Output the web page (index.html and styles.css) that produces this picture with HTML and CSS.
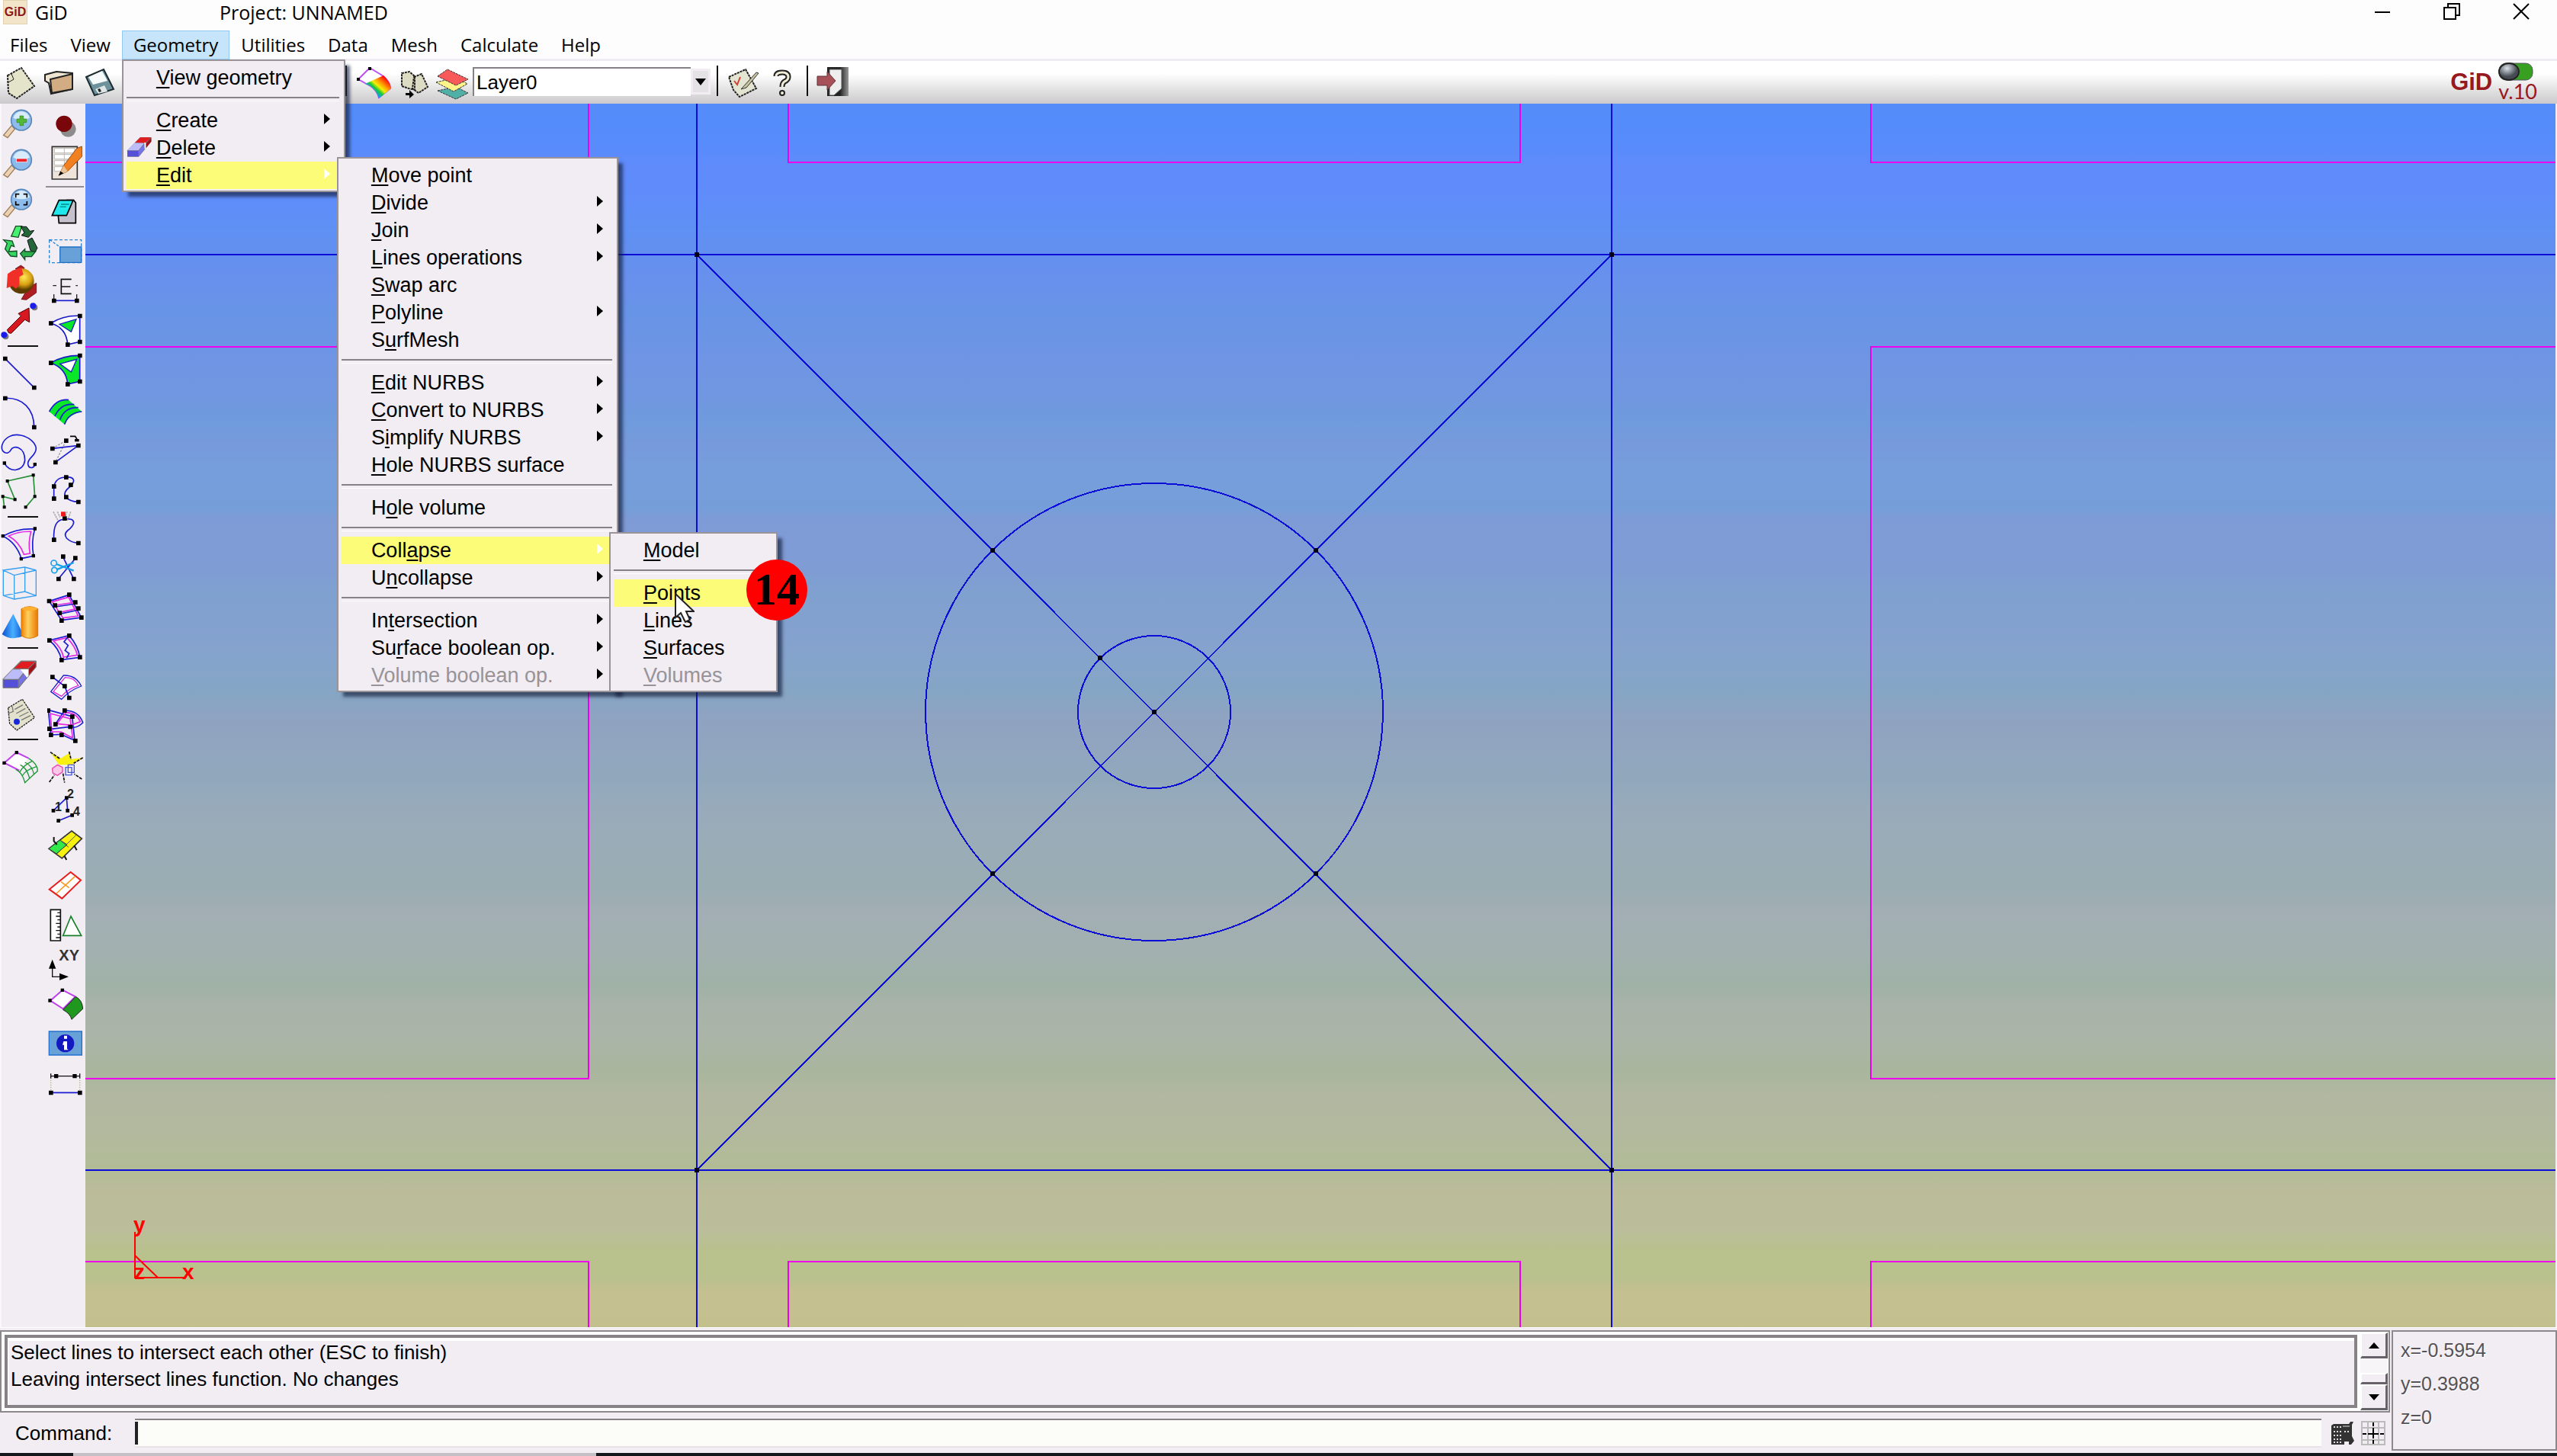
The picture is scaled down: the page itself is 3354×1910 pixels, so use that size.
FILE: index.html
```html
<!DOCTYPE html>
<html lang="en">
<head>
<meta charset="utf-8">
<title>GiD - Project: UNNAMED</title>
<link rel="stylesheet" href="styles.css">
</head>
<body>
<header class="titlebar">
  <span class="app-badge">GiD</span>
  <span class="app-name">GiD</span>
  <h1 class="project">Project: UNNAMED</h1>
  <div class="window-buttons">
    <button aria-label="Minimize"><svg viewBox="0 0 22 22"><path d="M1 12H21"/></svg></button>
    <button aria-label="Restore"><svg viewBox="0 0 22 22"><path d="M1 6H16V21H1ZM6 6V1H21V16H16"/></svg></button>
    <button aria-label="Close"><svg viewBox="0 0 22 22"><path d="M1 1L21 21M21 1L1 21"/></svg></button>
  </div>
</header>

<nav class="menubar">
  <ul>
    <li><button>Files</button></li>
    <li><button>View</button></li>
    <li class="open"><button>Geometry</button>
      <ul class="menu menu-geometry">
        <li><button><u>V</u>iew geometry</button></li>
        <li class="rule"></li>
        <li><button class="more"><u>C</u>reate</button></li>
        <li><button class="more"><svg class="menu-icon" viewBox="8 377 140 116"><path d="M12 452L82 381H142V405L74 487H12Z" fill="#777"/><path d="M12 452L50 412H104L72 452Z" fill="#bcbcf8"/><path d="M12 455H72V485H14Z" fill="#5450d8"/><path d="M72 455L108 414V442L74 485Z" fill="#7672e8"/><path d="M54 410L82 382H140L110 412Z" fill="#e01c20"/><path d="M114 414L141 385V405L114 438Z" fill="#a01018"/><path d="M104 410H112V440L106 446Z" fill="#fff"/></svg><u>D</u>elete</button></li>
        <li class="active"><button class="more"><u>E</u>dit</button>
          <ul class="menu menu-edit">
            <li><button><u>M</u>ove point</button></li>
            <li><button class="more"><u>D</u>ivide</button></li>
            <li><button class="more"><u>J</u>oin</button></li>
            <li><button class="more"><u>L</u>ines operations</button></li>
            <li><button><u>S</u>wap arc</button></li>
            <li><button class="more"><u>P</u>olyline</button></li>
            <li><button>S<u>u</u>rfMesh</button></li>
            <li class="rule"></li>
            <li><button class="more"><u>E</u>dit NURBS</button></li>
            <li><button class="more"><u>C</u>onvert to NURBS</button></li>
            <li><button class="more">S<u>i</u>mplify NURBS</button></li>
            <li><button><u>H</u>ole NURBS surface</button></li>
            <li class="rule"></li>
            <li><button>H<u>o</u>le volume</button></li>
            <li class="rule"></li>
            <li class="active"><button class="more">Coll<u>a</u>pse</button>
              <ul class="menu menu-collapse">
                <li><button><u>M</u>odel</button></li>
                <li class="rule"></li>
                <li class="active"><button><u>P</u>oints</button>
                  <svg class="pointer" viewBox="0 0 26 40"><path d="M1 1V32L8 26L14 38L20 35L15 24H25Z" fill="#fff" stroke="#222" stroke-width="2"/></svg>
                  <span class="step">14</span>
                </li>
                <li><button><u>L</u>ines</button></li>
                <li><button><u>S</u>urfaces</button></li>
                <li><button disabled><u>V</u>olumes</button></li>
              </ul>
            </li>
            <li><button class="more">U<u>n</u>collapse</button></li>
            <li class="rule"></li>
            <li><button class="more">In<u>t</u>ersection</button></li>
            <li><button class="more">Su<u>r</u>face boolean op.</button></li>
            <li><button class="more" disabled><u>V</u>olume boolean op.</button></li>
          </ul>
        </li>
      </ul>
    </li>
    <li><button>Utilities</button></li>
    <li><button>Data</button></li>
    <li><button>Mesh</button></li>
    <li><button>Calculate</button></li>
    <li><button>Help</button></li>
  </ul>
</nav>

<div class="toolbar">
  <button aria-label="New"><svg viewBox="0 80 52 56"><path d="M10 99L28 89L45 113L22 129L11 122Z" fill="#e4e4ca" stroke="#222" stroke-width="2" stroke-dasharray="3 1"/><path d="M11 108L18 104L15 97" fill="none" stroke="#222"/></svg></button>
  <button aria-label="Open"><svg viewBox="52 80 52 56"><path d="M59 98L74 94L95 96V117L67 123L64 109L59 106Z" fill="#eee6d2" stroke="#222" stroke-width="2"/><path d="M66 104L95 97V117L68 122Z" fill="#d2ac82" stroke="#222" stroke-width="2"/></svg></button>
  <button aria-label="Save"><svg viewBox="104 80 52 56"><path d="M113 101L136 91L149 117L124 125Z" fill="#6d929c" stroke="#1d2b30" stroke-width="2"/><path d="M116 101L134 93L141 106L122 111Z" fill="#f6fafa"/><path d="M125 117L137 112L141 120L129 123Z" fill="#dfe6e8"/><path d="M128 117L131 116L133 120L130 121Z" fill="#222"/></svg></button>
  <span class="covered"></span>
  <span class="divider"></span>
  <button class="wide" aria-label="Render"><svg viewBox="460 80 56 56"><defs><linearGradient id="rainbow" x1="1" y1="0" x2="0" y2="1"><stop offset=".15" stop-color="#f00"/><stop offset=".35" stop-color="#ff9800"/><stop offset=".48" stop-color="#f4f000"/><stop offset=".58" stop-color="#1dc83a"/><stop offset=".7" stop-color="#08a0f0"/><stop offset=".82" stop-color="#0018e0"/></linearGradient></defs><path d="M470 104L485 89L503 100Q512 108 512 116L497 128Q494 118 486 113Z" fill="#fff" stroke="#c050f0" stroke-width="2"/><path d="M503 99Q512 108 513 116L497 129Q494 119 486 113L479 110Z" fill="url(#rainbow)"/><path d="M468 102h4v4h-4zM483 88h4v4h-4z"/></svg></button>
  <button aria-label="Pages"><svg viewBox="516 80 50 56"><path d="M526 96L536 94L543 100V118L535 116L526 113ZM542 101L552 97L560 114L548 122L540 116Z" fill="#dcdcc4" stroke="#222" stroke-width="2" stroke-dasharray="3 1"/><path d="M531 122h5v-4l6 6l-6 5v-4h-5z"/></svg></button>
  <button aria-label="Layers"><svg viewBox="568 80 52 56"><path d="M574 119L598 114L614 122L598 130Z" fill="#50b0a8" stroke="#333" stroke-dasharray="3 1"/><path d="M572 108L598 102L613 110L595 120Z" fill="#fff48a" stroke="#333" stroke-dasharray="3 1"/><path d="M574 100L587 91L614 104L598 112Z" fill="#f85a5a" stroke="#333" stroke-dasharray="3 1"/></svg></button>
  <label class="layer-picker"><select aria-label="Layer"><option>Layer0</option></select><span class="drop"></span></label>
  <span class="divider"></span>
  <button class="wide" aria-label="Preferences"><svg viewBox="952 80 56 56"><path d="M958 101L980 91L994 116L972 127L964 118Z" fill="#e4e4d2" stroke="#222" stroke-width="2" stroke-dasharray="3 1"/><path d="M965 106L969 111L973 101" fill="none" stroke="#d04030" stroke-width="2"/><path d="M974 117L994 95L997 96L981 115Z" fill="#c8c4a0" stroke="#333"/></svg></button>
  <button aria-label="Help"><svg viewBox="1006 80 52 56"><path d="M1018 100Q1018 95 1026 95Q1034 95 1034 101Q1034 105 1029 107Q1026 109 1026 114" fill="none" stroke="#222" stroke-width="7"/><path d="M1018 100Q1018 95 1026 95Q1034 95 1034 101Q1034 105 1029 107Q1026 109 1026 114" fill="none" stroke="#f0ecd8" stroke-width="3"/><circle cx="1026" cy="122" r="3" fill="#f0ecd8" stroke="#222" stroke-width="2"/></svg></button>
  <span class="divider"></span>
  <button aria-label="Exit"><svg viewBox="1070 80 52 56"><defs><linearGradient id="door"><stop offset=".6" stop-color="#222"/><stop offset="1" stop-color="#999"/></linearGradient></defs><path d="M1087 88H1115V126H1087Z" fill="url(#door)"/><path d="M1090 91H1106V116L1096 125H1090Z" fill="#eee" stroke="#555"/><path d="M1074 100H1087V94L1098 106L1087 118V112H1074Z" fill="#a85058" stroke="#5b3338"/></svg></button>
  <div class="brand">
    <span class="brand-name">GiD</span>
    <div class="brand-side">
      <svg viewBox="0 0 46 24"><defs><radialGradient id="knob" cx=".4" cy=".3"><stop offset="0" stop-color="#dce2e8"/><stop offset="1" stop-color="#454b52"/></radialGradient></defs><rect x="1" y="1" width="44" height="22" rx="9" fill="#38a020" stroke="#556"/><ellipse cx="14" cy="12" rx="13" ry="11" fill="url(#knob)" stroke="#222" stroke-width="2"/></svg>
      <span>v.10</span>
    </div>
  </div>
</div>

<main class="workspace">
  <div class="palette">
    <div class="column column-main">
      <button aria-label="Zoom in"><svg viewBox="0 21 156 156"><g id="lens"><path d="M46 104L58 118L30 152L14 142Z" fill="#ecd2b4" stroke="#9c7a52" stroke-width="4"/><circle cx="84" cy="83" r="40" fill="#8dbcec" stroke="#5b87b8" stroke-width="5"/><path d="M52 74Q60 50 84 48Q110 50 117 74Q84 90 52 74Z" fill="#d7ebfb"/></g><path d="M78 66h14v12h12v14H92v12H78V92H66V78h12z" fill="#52b838" stroke="#2d8420" stroke-width="2"/></svg></button>
      <button aria-label="Zoom out"><svg viewBox="0 21 156 156"><use href="#lens"/><rect x="64" y="78" width="42" height="14" fill="#ee2028" stroke="#fff" stroke-width="2"/></svg></button>
      <button aria-label="Zoom frame"><svg viewBox="0 21 156 156"><use href="#lens"/><path d="M62 76V62H76M92 62H106V76M106 90V104H92M76 104H62V90" fill="none" stroke="#000" stroke-width="5"/></svg></button>
      <button aria-label="Redraw"><svg viewBox="0 489 156 156"><path d="M44 540L62 500H86L72 544Z" fill="#48f070" stroke="#174b24" stroke-width="4"/><path d="M82 502H104L118 520L134 517L112 544L84 536L96 526Z" fill="#24663a" stroke="#111" stroke-width="3"/><path d="M14 554L48 558L56 580L44 576L34 600L66 598V620L42 618L20 590L28 568Z" fill="#34d860" stroke="#174b24" stroke-width="4"/><path d="M108 556L126 546L147 586L138 602L120 596Z" fill="#24663a" stroke="#111" stroke-width="3"/><path d="M80 608L98 590V600H140L124 620H98V632Z" fill="#2ab04c" stroke="#174b24" stroke-width="4"/></svg></button>
      <button aria-label="Shading"><svg viewBox="0 645 156 156"><defs><radialGradient id="gold" cx=".6" cy=".35"><stop offset="0" stop-color="#ffe85a"/><stop offset=".6" stop-color="#d8a010"/><stop offset="1" stop-color="#5c3c00"/></radialGradient></defs><path d="M60 668L82 654L96 664L90 680ZM110 744L143 724V762L104 790L84 788Z" fill="#b01c24" stroke="#400" stroke-width="2"/><circle cx="84" cy="716" r="50" fill="url(#gold)"/><path d="M30 688L50 674L84 664L92 690L76 700V730L64 746L48 736L26 744Z" fill="#f03028"/></svg></button>
      <button aria-label="Rotate"><svg viewBox="0 801 156 156"><path d="M34 920L28 908L82 854L72 844L114 822L116 878L98 868L44 922Z" fill="#d81820" stroke="#500" stroke-width="3"/><circle cx="136" cy="820" r="12" fill="#777"/><circle cx="130" cy="814" r="12" fill="#1c1ce8"/><circle cx="22" cy="934" r="12" fill="#777"/><circle cx="16" cy="928" r="12" fill="#1c1ce8"/></svg></button>
      <hr>
      <button aria-label="Line"><svg viewBox="0 75 156 156"><path d="M20 91L134 205" class="blue"/><path d="M12 83h17v17h-17zM126 197h17v17h-17z"/></svg></button>
      <button aria-label="Arc"><svg viewBox="0 231 156 156"><path d="M20 247C90 244 134 290 134 361" class="blue"/><path d="M12 239h17v17h-17zM126 353h17v17h-17z"/></svg></button>
      <button aria-label="NURBS line"><svg viewBox="0 387 156 156"><path d="M18 503C34 540 90 540 98 492C98 436 50 430 42 452C30 474 2 460 8 432C18 400 50 386 82 393C116 400 140 424 142 444C142 476 108 480 110 506C112 526 132 524 138 508" class="blue"/><path d="M11 496h13v13h-13zM131 501h13v13h-13z"/></svg></button>
      <button aria-label="Polyline"><svg viewBox="0 543 156 156"><path d="M17 676L12 634L59 646L29 573L131 550L137 634L101 676" fill="none" stroke="#289038" stroke-width="5"/><path d="M11 670h12v12h-12zM5 628h12v12h-12zM53 640h12v12h-12zM23 567h12v12h-12zM125 544h12v12h-12zM131 628h12v12h-12zM95 670h12v12h-12z"/></svg></button>
      <hr>
      <button aria-label="NURBS surface"><svg viewBox="0 747 156 156"><path d="M12 790Q66 758 137 762Q122 812 132 868L84 878Q64 816 12 790Z" class="blue"/><path d="M34 790Q74 770 122 772Q110 818 118 858L94 862Q76 812 34 790Z" class="pink"/><path d="M5 783h13v13h-13zM131 754h13v13h-13zM125 861h13v13h-13zM77 873h13v13h-13z"/></svg></button>
      <button aria-label="Volume"><svg viewBox="0 3 156 156"><path d="M13 24L98 12L142 24L56 44ZM13 24V124L56 138V44M56 138L142 124V24M13 124L98 108L142 124M98 12V108" fill="none" stroke="#38a0f0" stroke-width="4"/></svg></button>
      <button aria-label="Object"><svg viewBox="0 159 156 156"><defs><linearGradient id="blueFade" x2="1"><stop stop-color="#0a50d0"/><stop offset=".5" stop-color="#48b0ff"/><stop offset="1" stop-color="#0a50d0"/></linearGradient><linearGradient id="orangeFade" x2="1"><stop stop-color="#f08000"/><stop offset=".4" stop-color="#ffd060"/><stop offset="1" stop-color="#e87800"/></linearGradient></defs><path d="M52 196L8 276Q44 304 94 282Z" fill="url(#blueFade)"/><path d="M84 176Q116 158 149 176V282Q116 302 84 282Z" fill="url(#orangeFade)" stroke="#d87800" stroke-width="3"/><ellipse cx="116" cy="176" rx="30" ry="8" fill="#ffb030"/></svg></button>
      <hr>
      <button aria-label="Delete"><svg viewBox="0 363 156 156"><path d="M12 452L82 381H142V405L74 487H12Z" fill="#777" stroke="#777" stroke-width="3"/><path d="M14 452L50 415H102L72 452Z" fill="#bcbcf8"/><path d="M14 456H70V485H14Z" fill="#5450d8"/><path d="M74 455L108 418V442L74 483Z" fill="#7672e8"/><path d="M56 410L84 384H138L110 410Z" fill="#e01c20"/><path d="M114 412L140 386V405L114 436Z" fill="#a01018"/><path d="M80 414H112V440L106 446Z" fill="#fff"/></svg></button>
      <button aria-label="List"><svg viewBox="0 519 156 156"><path d="M32 566L88 532L136 604L66 654L38 628Z" fill="#e2e2cc" stroke="#222" stroke-width="4" stroke-dasharray="8 3"/><path d="M32 588L52 580L48 560M58 572L90 554M64 588L100 568M76 600L112 582M84 614L120 596" fill="none" stroke="#777" stroke-width="4"/><circle cx="66" cy="620" r="12" fill="#1828d8"/></svg></button>
      <hr>
      <button aria-label="Mesh"><svg viewBox="0 723 156 156"><path d="M76 812L17 782L65 741L112 764" fill="#fff" stroke="#c040f0" stroke-width="6"/><path d="M112 764Q148 786 148 814L98 860Q88 820 62 808M80 790Q108 804 116 844M98 780Q126 792 134 828M88 834Q96 812 146 796M78 818Q92 792 126 776" fill="none" stroke="#209838" stroke-width="4"/><path d="M10 776h13v13h-13zM59 735h13v13h-13z"/></svg></button>
    </div>
    <div class="column column-extra">
      <button aria-label="Point"><svg viewBox="168 21 168 156"><circle cx="268" cy="118" r="31" fill="#8c8c8c"/><circle cx="252" cy="97" r="32" fill="#78060a"/></svg></button>
      <button aria-label="Edit sheet"><svg viewBox="168 177 168 156"><path d="M205 187H304V315H205Z" fill="#eee4da" stroke="#333" stroke-width="5"/><path d="M214 194H294V212H214ZM214 218H294V236H214ZM214 242H270V260H214ZM214 266H250V284H214ZM253 192V262" fill="#fff" stroke="#bbb" stroke-width="3"/><path d="M232 300L250 262L302 194L322 186V226L266 284Z" fill="#f08020" stroke="#9c4a08" stroke-width="3"/><path d="M232 300L250 262L266 284Z" fill="#e8c49c"/><path d="M230 302L238 284L250 292Z"/></svg></button>
      <hr>
      <button aria-label="Book"><svg viewBox="168 363 168 156"><path d="M229 458L262 398H290L298 408V488H232Z" fill="#c4c0cc" stroke="#000" stroke-width="5"/><path d="M205 458L232 398H288L262 458Z" fill="#20e8ec" stroke="#000" stroke-width="5"/><path d="M240 414H272M236 424H260" stroke="#088" stroke-width="4"/></svg></button>
      <button aria-label="Window zoom"><svg viewBox="168 519 168 156"><path d="M194 554H320V644H194Z" fill="none" stroke="#2884d0" stroke-width="4" stroke-dasharray="12 8"/><path d="M196 554L236 582" stroke="#2884d0" stroke-width="4" stroke-dasharray="10 6"/><path d="M236 582H320V643H236Z" fill="#68a0d8" stroke="#2070c8" stroke-width="4"/></svg></button>
      <button aria-label="Entity"><svg viewBox="168 675 168 156"><path d="M281 709H241V766H281M241 738H277" fill="none" stroke="#111" stroke-width="5"/><path d="M208 734H222M298 734H306M212 768V790M302 768V790" stroke="#222" stroke-width="4"/><path d="M212 793H302" class="blue"/><path d="M204 785h17v17h-17zM294 785h17v17h-17z"/></svg></button>
      <button aria-label="Inner surface"><svg viewBox="168 831 168 156"><path d="M200 882Q250 850 314 853V955L266 966Q262 900 200 882Z" fill="#fff" stroke="#1818c8" stroke-width="5"/><path d="M234 886L300 866L280 916Z" fill="#08e828" stroke="#1818c8" stroke-width="4"/><path d="M192 874h17v17h-17zM306 845h17v17h-17zM306 947h17v17h-17zM258 958h17v17h-17z"/></svg></button>
      <button aria-label="Holed surface"><svg viewBox="168 57 168 156"><path d="M200 108Q250 78 314 79V181L266 192Q262 130 200 108Z" fill="#08e828" stroke="#1818c8" stroke-width="5"/><path d="M236 112L302 94L280 144Z" fill="#fff" stroke="#1818c8" stroke-width="4"/><path d="M192 100h17v17h-17zM306 71h17v17h-17zM306 173h17v17h-17zM258 184h17v17h-17z"/></svg></button>
      <button aria-label="Parallel surfaces"><svg viewBox="168 213 168 156"><path d="M194 300Q222 248 270 254L322 300Q272 310 254 350Z" fill="#08e828"/><path d="M194 300Q222 248 270 254M216 318Q240 266 292 272M236 332Q254 282 308 284M254 350Q270 304 322 300" class="blue"/></svg></button>
      <button aria-label="Swap"><svg viewBox="168 369 168 156"><path d="M206 445L260 414L218 499" fill="none" stroke="#999" stroke-width="4" stroke-dasharray="8 5"/><path d="M206 445L308 433L218 499" class="blue"/><path d="M276 397H296L306 414" fill="none" stroke="#000" stroke-width="5"/><path d="M294 408h17v10h-17zM198 437h17v17h-17zM252 406h17v17h-17zM300 425h17v17h-17zM210 491h17v17h-17z"/></svg></button>
      <button aria-label="Spline"><svg viewBox="168 525 168 156"><path d="M212 642V594Q220 558 260 558Q288 556 290 572Q286 590 270 600Q250 616 256 634Q274 654 308 655" class="blue"/><path d="M204 634h17v17h-17zM204 586h17v17h-17zM252 550h17v17h-17zM270 580h17v17h-17zM252 628h17v17h-17zM300 647h17v17h-17z"/></svg></button>
      <button aria-label="Move spline point"><svg viewBox="168 681 168 156"><path d="M212 804Q208 722 254 724Q288 718 290 736Q288 752 266 768Q250 782 262 798Q280 816 308 817" class="blue"/><path d="M210 694L228 728M226 694L236 716M278 694L266 728M264 694L258 712" stroke="#aaa" stroke-width="5" stroke-dasharray="7 3"/><path d="M246 712h17v17h-17zM204 796h17v17h-17zM300 809h17v17h-17z"/><path d="M240 694h18v18h-18z" fill="#f01818"/></svg></button>
      <button aria-label="Cut"><svg viewBox="168 837 168 156"><path d="M248 872L290 958M296 878L230 958" class="blue"/><path d="M222 900L290 926M222 922L290 894" stroke="#18a0e8" stroke-width="7"/><circle cx="212" cy="896" r="11" fill="none" stroke="#18a0e8" stroke-width="5"/><circle cx="214" cy="924" r="11" fill="none" stroke="#18a0e8" stroke-width="5"/><path d="M240 862h17v17h-17zM288 868h17v17h-17zM222 950h17v17h-17zM282 950h17v17h-17z"/></svg></button>
      <button aria-label="Divide surface"><svg viewBox="168 93 168 156"><path d="M194 146L272 121L320 210L242 221Z" class="blue"/><path d="M216 162L296 150M234 190L308 174M206 148L270 130L308 204L248 212Z" class="pink"/><path d="M218 168L298 156M236 196L310 180" class="blue"/><path d="M185 137h17v17h-17zM264 112h17v17h-17zM288 142h17v17h-17zM300 166h17v17h-17zM312 202h17v17h-17zM234 214h17v17h-17zM226 184h17v17h-17zM208 154h17v17h-17z"/></svg></button>
      <button aria-label="Split surface"><svg viewBox="168 249 168 156"><path d="M194 300L272 281Q308 322 314 367L242 377Q232 330 194 300Z" class="blue"/><path d="M210 302L264 290Q298 326 304 358L250 366Q242 330 210 302Z" class="pink"/><path d="M268 286L252 306L268 320L256 340L272 352L262 370" class="blue"/><path d="M186 292h17v17h-17zM264 273h17v17h-17zM306 358h17v17h-17zM234 369h17v17h-17z"/></svg></button>
      <button aria-label="Trim surface"><svg viewBox="168 405 168 156"><path d="M200 502L250 438Q298 436 320 480Q272 498 242 532Z" fill="#fff" stroke="#1818c8" stroke-width="4"/><path d="M210 502L256 446Q294 446 308 478Q268 490 242 520Z" fill="none" stroke="#e020e0" stroke-width="4"/><path d="M206 444L248 476M256 484L272 526" class="blue"/><path d="M198 436h17v17h-17zM246 472h17v17h-17zM264 518h17v17h-17z"/></svg></button>
      <button aria-label="Intersect surfaces"><svg viewBox="168 561 168 156"><path d="M190 574L284 600L294 694L240 670L200 672ZM218 630L254 576Q310 576 326 624Q300 650 276 640L194 650" class="blue"/><path d="M198 588L276 608L286 684L240 660L204 660ZM224 628L260 584Q302 586 316 620L278 634Z" class="pink"/><path d="M186 568h12v17h-12zM246 568h17v17h-17zM276 592h17v17h-17zM268 632h17v17h-17zM210 622h17v17h-17zM186 640h17v17h-17zM192 664h17v17h-17zM234 664h17v17h-17zM288 687h17v17h-17z"/></svg></button>
      <button aria-label="Explode"><svg viewBox="168 717 168 156"><path d="M198 740L240 764L272 744L278 768L326 762L282 790H232Z" fill="#f8f010"/><path d="M198 740L236 766M326 762L290 784M194 858L214 830M248 824L254 860M322 846L292 826M272 738L280 770" stroke="#111" stroke-width="5" stroke-dasharray="12 4"/><path d="M206 804L226 790L246 800V818L226 832L208 822Z" fill="#f8c8e8" stroke="#f040b0" stroke-width="4"/><path d="M258 800H282V830H258ZM268 790H292V820H268Z" fill="none" stroke="#4858e0" stroke-width="4"/></svg></button>
      <button aria-label="Renumber"><svg viewBox="168 873 168 156"><path d="M210 970L262 920L266 970M230 1010L284 988" class="blue"/><path d="M203 963h14v14h-14zM255 913h14v14h-14zM259 963h14v14h-14zM223 1003h14v14h-14zM277 981h14v14h-14z"/><g class="digits"><text x="216" y="972">1</text><text x="264" y="922">2</text><text x="288" y="990">4</text></g></svg></button>
      <button aria-label="Patch"><svg viewBox="168 69 168 156"><path d="M192 160L282 90L322 120L244 198Z" fill="#f8f010" stroke="#333" stroke-width="5"/><path d="M192 160L236 126L264 144L222 180Z" fill="#30e848" stroke="#333" stroke-width="3"/><path d="M222 182L302 104M236 126L270 154" stroke="#555" stroke-width="3"/><path d="M212 114V130L224 144M292 148L302 166M254 190L262 204" fill="none" stroke="#111" stroke-width="6"/></svg></button>
      <button aria-label="Frame patch"><svg viewBox="168 225 168 156"><path d="M194 320L278 252L318 284L244 356Z" fill="#fff" stroke="#e81c1c" stroke-width="6"/><path d="M222 336L296 268M240 290L272 314" stroke="#f89820" stroke-width="5"/></svg></button>
      <button aria-label="Measure"><svg viewBox="168 381 168 156"><path d="M199 400H238V522H199Z" fill="#fff" stroke="#111" stroke-width="5"/><path d="M226 412H238M220 426H238M226 440H238M220 454H238M226 468H238M220 482H238M226 496H238M220 510H238" stroke="#111" stroke-width="4"/><path d="M279 426L248 502H320Z" fill="#fff" stroke="#188028" stroke-width="5"/></svg></button>
      <button aria-label="XY plane"><svg viewBox="168 537 168 156"><text class="axis-label" x="232" y="599">XY</text><path d="M206 610V664H262" fill="none" stroke="#111" stroke-width="4"/><path d="M206 596L220 632H192ZM270 664L234 650V678Z"/></svg></button>
      <button aria-label="Filled surface"><svg viewBox="168 693 168 156"><path d="M198 758L246 716L296 742L248 790Z" fill="#fff" stroke="#c040f0" stroke-width="6"/><path d="M248 794L298 742Q324 756 326 790L282 832Q276 808 248 794Z" fill="#209820" stroke="#222" stroke-width="3"/><path d="M190 751h13v13h-13zM239 710h13v13h-13z"/></svg></button>
      <button aria-label="Information"><svg viewBox="168 849 168 156"><path d="M193 879H322V972H193Z" fill="#68a0d8" stroke="#2070d0" stroke-width="4"/><circle cx="257" cy="926" r="35" fill="#1418c0"/><path d="M252 896h12v12h-12zM250 918h14v30l6 4h-18v-20h-6z" fill="#fff"/></svg></button>
      <button aria-label="Distance"><svg viewBox="168 1005 168 156"><path d="M200 1055H314M200 1045V1064M314 1045V1064" stroke="#111" stroke-width="4"/><path d="M200 1070V1112M314 1070V1112" stroke="#aab88c" stroke-width="4" stroke-dasharray="4 5"/><path d="M200 1120H314" class="blue"/><path d="M213 1047h16v16h-16zM286 1047h16v16h-16zM192 1112h17v17h-17zM306 1112h17v17h-17z"/></svg></button>
    </div>
  </div>
  <div class="view">
    <svg viewBox="0 0 3240 1606" preserveAspectRatio="xMinYMin slice" aria-label="Model">
      <g class="magenta">
        <path d="M0 77H660V0M922 0V77H1882V0M2342 0V77H3240"/>
        <path d="M0 319H660V1279H0M3240 319H2342V1279H3240"/>
        <path d="M0 1519H660V1606M922 1606V1519H1882V1606M2342 1606V1519H3240"/>
      </g>
      <g class="geometry">
        <path d="M0 198H3240M0 1399H3240M802 0V1606M2002 0V1606"/>
        <path d="M802 198L2002 1399M2002 198L802 1399"/>
        <circle cx="1402" cy="798" r="300"/>
        <circle cx="1402" cy="798" r="100"/>
      </g>
      <path class="nodes" d="M799 195h6v6h-6zM1999 195h6v6h-6zM799 1396h6v6h-6zM1999 1396h6v6h-6zM1399 795h6v6h-6zM1187 583h6v6h-6zM1611 583h6v6h-6zM1187 1007h6v6h-6zM1611 1007h6v6h-6zM1328 724h6v6h-6z"/>
      <g class="axes">
        <path d="M65 1480V1540H130M65 1511L95 1540"/>
        <text x="63" y="1480">y</text><text x="127" y="1542">x</text><text x="64" y="1542">z</text>
      </g>
    </svg>
  </div>
</main>

<footer class="bottom">
  <div class="console">
    <div class="log-frame">
      <div class="log" role="log">
        <p>Select lines to intersect each other (ESC to finish)</p>
        <p>Leaving intersect lines function. No changes</p>
      </div>
      <div class="scroll">
        <button class="up" aria-label="Scroll up"></button>
        <span class="trough"></span>
        <span class="thumb"></span>
        <button class="down" aria-label="Scroll down"></button>
      </div>
    </div>
    <div class="command">
      <label for="command">Command:</label>
      <div class="command-box"><span class="caret"></span><input id="command" type="text"></div>
      <button aria-label="Calculator"><svg viewBox="0 0 32 32"><path d="M1 6L4 4H24L26 1H30L28 5V20L31 26L27 31H24V27H18V31H1Z" fill="#333"/><path d="M4 8H16M4 14H14M18 14H24M4 19H16M4 24H16M4 28H16" stroke="#ddd" stroke-width="2" stroke-dasharray="2 2"/><path d="M16 7H25" stroke="#888" stroke-width="2"/></svg></button>
      <button aria-label="Grid"><svg viewBox="0 0 32 32"><path d="M1 1H31V31H1ZM9 1V31M23 1V31M1 9H31M1 25H31" fill="none" stroke="#bbb" stroke-width="2"/><path d="M16 2V30M2 17H30" stroke="#000" stroke-width="2" stroke-dasharray="5 2 14 2"/></svg></button>
    </div>
  </div>
  <div class="coords">
    <p>x=-0.5954</p>
    <p>y=0.3988</p>
    <p>z=0</p>
  </div>
</footer>
<div class="taskbar"></div>
</body>
</html>
```
FILE: styles.css
```css
* { box-sizing: border-box; }
html, body { height: 100%; }
body {
  margin: 0;
  display: flex;
  flex-direction: column;
  overflow: hidden;
  background: #f1edf3;
  color: #000;
  font: 26px/36px "Liberation Sans", Arial, sans-serif;
}
button {
  margin: 0;
  padding: 0;
  border: 0;
  background: none;
  color: inherit;
  font: inherit;
  text-align: left;
}
ul { list-style: none; margin: 0; padding: 0; }
p { margin: 0; }
svg { display: block; }

/* Title bar */
.titlebar {
  display: flex;
  align-items: center;
  height: 40px;
  flex: none;
  padding: 0 28px 8px 4px;
  background: #fdfdfd;
  font: 25px/32px "Open Sans", "Noto Sans", sans-serif;
}
.app-badge {
  width: 32px;
  height: 32px;
  margin-right: 10px;
  border: 1px solid #e2d2b0;
  background: #f1e4c8;
  color: #8c1818;
  font: bold 16px/30px "Liberation Sans", sans-serif;
  text-align: center;
}
.app-name { width: 242px; }
.project { margin: 0; font: inherit; }
.window-buttons { display: flex; gap: 48px; margin-left: auto; padding: 0 8px 2px 0; }
.window-buttons button { width: 43px; }
.window-buttons svg { width: 22px; height: 22px; margin-left: auto; fill: none; stroke: #000; stroke-width: 2; }

/* Menu bar */
.menubar {
  flex: none;
  height: 40px;
  border-bottom: 3px solid #f0ecf3;
  background: #fdfdfd;
}
.menubar > ul { display: flex; margin-left: -2px; }
.menubar > ul > li { position: relative; }
.menubar > ul > li > button {
  height: 38px;
  padding: 0 14px;
  border: 1px solid transparent;
  font: 24px/34px "Open Sans", "Noto Sans", sans-serif;
}
.menubar > ul > .open > button { border-color: #90c8f6; background: #c6e4fa; }

/* Drop-down menus */
.menu {
  position: absolute;
  z-index: 2;
  padding: 4px;
  border: 2px solid #9a9498;
  background: #f1edf3;
  box-shadow: 7px 7px 4px -1px rgba(20, 30, 60, .65);
  font-size: 27px;
}
.menu li { position: relative; }
.menu li > button {
  display: block;
  position: relative;
  width: 100%;
  height: 36px;
  padding-left: 39px;
  line-height: 37px;
  white-space: nowrap;
}
.menu button:disabled { color: #979399; }
.menu u { text-decoration-thickness: 2px; text-underline-offset: 3px; text-decoration-skip-ink: none; }
.menu .active > button { background: #fcfc78; }
.menu .rule { height: 20px; padding-top: 7px; }
.menu .rule::before {
  content: "";
  display: block;
  height: 3px;
  margin-right: 2px;
  border-top: 2px solid #858187;
  border-bottom: 1px solid #fff;
}
.more::after {
  content: "";
  position: absolute;
  right: 14px;
  top: 9px;
  border: solid transparent;
  border-width: 7px 0 7px 8px;
  border-left-color: #000;
}
.active > .more::after { border-left-color: #fff; }
.menu-icon { position: absolute; left: 0; top: 1px; width: 34px; height: 32px; }
.menu-geometry { left: 0; top: 38px; width: 293px; padding-bottom: 2px; }
.menu-edit { left: 276px; top: -6px; width: 369px; padding-bottom: 2px; }
.menu-collapse { left: 351px; top: -6px; width: 221px; padding-bottom: 2px; }
.pointer { position: absolute; z-index: 3; left: 80px; top: 18px; width: 26px; height: 40px; }
.step {
  position: absolute;
  z-index: 3;
  left: 174px;
  top: -26px;
  width: 80px;
  height: 80px;
  border-radius: 50%;
  background: #f00;
  font: bold 60px/78px "Liberation Serif", serif;
  text-align: center;
}

/* Toolbar */
.toolbar {
  display: flex;
  align-items: center;
  flex: none;
  height: 56px;
  background: linear-gradient(#fff 0, #fff 30%, #cbc9cb 100%);
}
.toolbar button svg { width: 52px; height: 56px; }
.toolbar .wide svg { width: 56px; }
.covered { width: 297px; }
.divider { width: 2px; height: 40px; margin: -4px 5px 0 0; background: #111; }
.layer-picker { display: flex; align-items: center; height: 38px; margin: -2px 8px 0 0; }
.layer-picker select {
  appearance: none;
  width: 286px;
  height: 38px;
  padding: 0 3px;
  border: 0;
  border-top: 2px solid #858187;
  border-left: 2px solid #858187;
  border-radius: 0;
  background: #fff;
  color: #000;
  font: inherit;
}
.drop { display: grid; place-items: center; width: 26px; height: 34px; border: 3px solid #f1edf3; background: #e4e2e4; }
.drop::before { content: ""; border: solid transparent; border-width: 9px 7px 0; border-top-color: #000; }
.layer-picker ~ .divider { margin-right: 8px; }
.brand { display: flex; align-items: center; gap: 8px; margin: 0 26px 0 auto; color: #981820; }
.brand-name { font: bold 31px/48px "Liberation Sans", sans-serif; }
.brand-side { font: 27px/28px Lato, sans-serif; }
.brand-side svg { width: 46px; height: 24px; }

/* Tool palette */
.workspace { display: flex; flex: 1; min-height: 0; padding-right: 2px; }
.palette { display: flex; flex: none; gap: 4px; width: 112px; border-left: 2px solid #faf8fa; }
.column { display: flex; flex-direction: column; padding-top: 1px; }
.column button { height: 52px; flex: none; }
.column svg { height: 52px; }
.column-main { width: 50px; }
.column-main svg { width: 52px; margin-left: -2px; }
.column-extra svg { width: 56px; }
.column hr { flex: none; height: 16px; margin: 0 2px 0 8px; border: solid transparent; border-width: 4px 0 10px; background: #111 padding-box; }
.column-extra hr { height: 10px; margin: 0 2px 0 4px; border-width: 3px 0 5px; background-color: #918d92; }
.blue { fill: none; stroke: #1c1cd0; stroke-width: 5; }
.pink { fill: none; stroke: #e428e4; stroke-width: 5; }
.digits { font: bold 48px "Liberation Sans", sans-serif; fill: #222; }
.axis-label { font: bold 60px "Liberation Sans", sans-serif; fill: #333; }

/* Drawing area */
.view {
  flex: 1;
  min-width: 0;
  background: linear-gradient(
    #548cfa 0, #568cfb 3%, #5f8bfb 5%, #5f8dfa 8%, #5e90f4 10%,
    #6590ee 13%, #6991ec 15%, #6794e6 17%, #6f95e4 21%, #7097e0 24%,
    #6f9bdc 26%, #779adc 28%, #769edc 30%, #759ed9 33%, #7e9bd6 34%,
    #7f9cd5 38%, #7fa1cf 40%, #84a1cf 43%, #85a4ca 46%, #85a5c4 48%,
    #8fa3c2 50%, #91a5bf 53%, #90a8bc 55%, #99abba 58%, #9aacb6 61%,
    #99adb2 64%, #a2aeb4 66%, #a2b0b0 69%, #9fb2a6 72%, #aab3a9 74%,
    #abb4a8 76%, #a9b69e 79%, #b1b7a0 81%, #b2b99e 84%, #b1bc96 87%,
    #bbbb9a 89%, #bbbe9a 92%, #b9c18c 94%, #b9c18e 96%, #c4c090 97%, #c4c08e 100%);
}
.view svg { width: 100%; height: 100%; }
.magenta { fill: none; stroke: #ee00ee; stroke-width: 2; }
.geometry { fill: none; stroke: #0c0cd8; stroke-width: 2; shape-rendering: crispEdges; }
.nodes { fill: #000018; }
.axes { fill: none; stroke: #f00; stroke-width: 2; }
.axes text { fill: #f00; stroke: none; font: bold 28px "Liberation Sans", sans-serif; }

/* Message log and command line */
.bottom { display: flex; flex: none; gap: 2px; padding-top: 3px; border-top: 1px solid #fff; }
.console { flex: 1; min-width: 0; }
.log-frame { display: flex; gap: 4px; height: 108px; padding: 4px; border: 2px solid #8c888c; background: #fdfdfd; }
.log {
  flex: 1;
  padding: 2px 4px;
  border: 4px solid #868286;
  background: #f1edf3;
  box-shadow: inset 2px 4px #fff;
  line-height: 35px;
}
.scroll { display: flex; flex-direction: column; width: 36px; margin: -3px -3px -3px 0; }
.scroll button, .thumb {
  display: grid;
  place-items: center;
  height: 34px;
  border: 2px solid #fff;
  border-right: 3px solid #66626a;
  border-bottom: 3px solid #66626a;
  background: #f1edf3;
}
.scroll .thumb { height: 15px; }
.trough { flex: 1; background: #f7f5f8; }
.up::before, .down::before { content: ""; border: solid transparent; }
.up::before { border-width: 0 7px 8px; border-bottom-color: #000; }
.down::before { border-width: 8px 7px 0; border-top-color: #000; }
.command { display: flex; align-items: center; gap: 8px; height: 53px; padding: 0 6px 0 20px; }
.command label { width: 149px; }
.command-box { display: flex; flex: 1; height: 38px; margin-right: 4px; padding: 2px 0; border-top: 2px solid #858187; border-bottom: 2px solid #e6e2e6; background: #fcfdf8; }
.caret { width: 4px; background: #222; }
.command input { flex: 1; border: 0; padding: 0 4px; background: none; font: inherit; outline: 0; }
.command svg { width: 32px; height: 32px; }
.coords {
  width: 217px;
  height: 158px;
  padding: 2px 10px;
  border: 2px solid #8c888c;
  color: #555257;
  font-size: 25px;
  line-height: 44px;
  text-shadow: 1px 1px #fff;
}
.taskbar { flex: none; height: 4px; background: linear-gradient(90deg, #141818 0 96px, #c4c0c4 96px 782px, #141818 782px); }
```
